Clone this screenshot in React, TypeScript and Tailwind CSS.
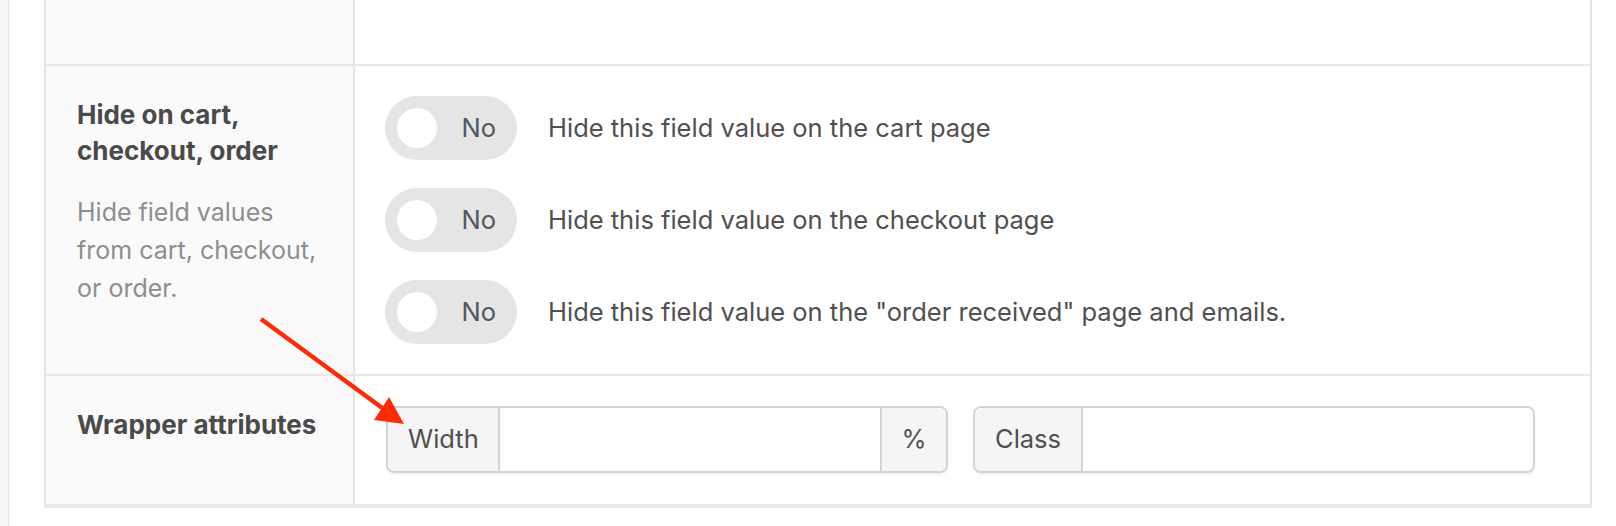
import React from "react";

function Toggle() {
  return (
    <div className="flex h-[64px] w-[132px] shrink-0 items-center justify-between rounded-full bg-[#e5e5e5] pl-[12px] pr-[21px]">
      <div className="h-[40px] w-[40px] rounded-full bg-white" />
      <span className="text-[25.5px] leading-none text-[#50575e]">No</span>
    </div>
  );
}

function ToggleRow({ text }: { text: string }) {
  return (
    <div className="flex items-center gap-[31px]">
      <Toggle />
      <span className="text-[25.5px] text-[#505050]">{text}</span>
    </div>
  );
}

function InputGroup({ before, after, beforeW }: { before: string; after?: string; beforeW: string }) {
  return (
    <div className="flex h-[67px] w-[562px] overflow-hidden rounded-[8px] border-2 border-[#cfd3db] shadow-[0_2px_2px_rgba(0,0,0,0.06)]">
      <div className={`flex items-center border-r-2 border-[#cfd3db] bg-[#f5f5f5] pl-[20px] text-[25.5px] text-[#505050] ${beforeW}`}>
        {before}
      </div>
      <div className="flex-1 bg-white" />
      {after && (
        <div className="flex w-[66px] items-center justify-center border-l-2 border-[#cfd3db] bg-[#f5f5f5] text-[25.5px] text-[#505050]">
          {after}
        </div>
      )}
    </div>
  );
}

export default function App() {
  return (
    <div
      className="relative flex h-[526px] w-[1616px] overflow-hidden bg-white"
      style={{ fontFamily: "Inter, 'Noto Sans', sans-serif" }}
    >
      <div className="w-[8px] shrink-0 bg-[#f7f7f7]" />
      <div className="w-px shrink-0 bg-[#e6e6e6]" />
      <div className="w-[35px] shrink-0" />
      <div className="flex h-[508px] w-[1548px] shrink-0 flex-col border-x-2 border-b-4 border-x-[#e4e4e4] border-b-[#ebebeb]">
        {/* Row 1 */}
        <div className="flex h-[66px] border-b-2 border-[#e8e8e8]">
          <div className="w-[309px] shrink-0 border-r-2 border-[#e4e4e4] bg-[#fafafa]" />
          <div className="flex-1 bg-white" />
        </div>
        {/* Row 2 */}
        <div className="flex h-[310px] border-b-2 border-[#e8e8e8]">
          <div className="w-[309px] shrink-0 border-r-2 border-[#e4e4e4] bg-[#fafafa] pl-[31px] pr-[20px] pt-[31px]">
            <div className="text-[26px] font-bold leading-[36px] text-[#4a4a4a]">
              Hide on cart,
              <br />
              checkout, order
            </div>
            <div className="mt-[24px] text-[25px] leading-[38px] text-[#8e8e8e]">
              Hide field values
              <br />
              from cart, checkout,
              <br />
              or order.
            </div>
          </div>
          <div className="flex flex-1 flex-col gap-[28px] bg-white pl-[30px] pt-[30px]">
            <ToggleRow text="Hide this field value on the cart page" />
            <ToggleRow text="Hide this field value on the checkout page" />
            <ToggleRow text={'Hide this field value on the "order received" page and emails.'} />
          </div>
        </div>
        {/* Row 3 */}
        <div className="flex flex-1">
          <div className="w-[309px] shrink-0 border-r-2 border-[#e4e4e4] bg-[#fafafa] pl-[31px] pt-[31px]">
            <div className="text-[26px] font-bold leading-[36px] text-[#4a4a4a]">Wrapper attributes</div>
          </div>
          <div className="flex flex-1 gap-[25px] bg-white pl-[31px] pt-[30px]">
            <InputGroup before="Width" after="%" beforeW="w-[112px]" />
            <InputGroup before="Class" beforeW="w-[108px]" />
          </div>
        </div>
      </div>
      <svg
        className="pointer-events-none absolute left-0 top-0"
        width="1616"
        height="526"
        viewBox="0 0 1616 526"
      >
        <line x1="261" y1="319" x2="385" y2="410" stroke="#ff2a06" strokeWidth="4.5" strokeLinecap="butt" />
        <polygon points="404,424 374,420 389,397" fill="#ff2a06" />
      </svg>
    </div>
  );
}
